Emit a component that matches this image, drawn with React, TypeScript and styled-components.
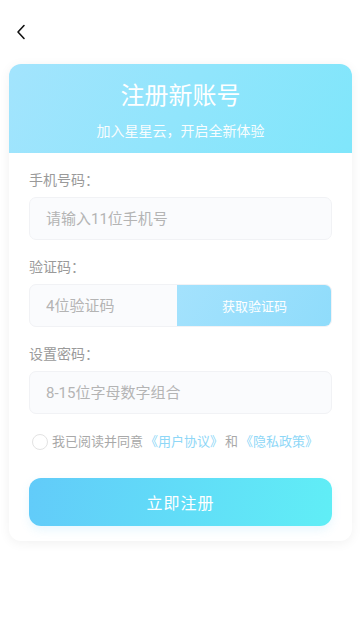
import { createGlobalStyle, styled } from "styled-components";

const GlobalStyle = createGlobalStyle`
  body {
    margin: 0;
    background: #ffffff;
    font-family: Roboto, "Noto Sans CJK SC", sans-serif;
  }
`;

const Page = styled.div`
  width: 361px;
  min-height: 643px;
  background: #ffffff;
`;

const TopBar = styled.div`
  height: 64px;
  display: flex;
  align-items: center;
  padding-left: 12px;
  box-sizing: border-box;
`;

const BackButton = styled.button`
  width: 20px;
  height: 20px;
  padding: 0;
  border: none;
  background: none;
  display: flex;
  align-items: center;
  justify-content: center;
  margin-top: -1px;
`;

const Card = styled.div`
  margin: 0 9px;
  background: #ffffff;
  border-radius: 12px;
  overflow: hidden;
  box-shadow: 0 2px 12px rgba(0, 0, 0, 0.06);
`;

const Header = styled.div`
  height: 89px;
  background: linear-gradient(120deg, #a3e4fd 0%, #7fe6fb 100%);
  display: flex;
  flex-direction: column;
  align-items: center;
  color: #ffffff;
`;

const Title = styled.div`
  margin-top: 16px;
  font-size: 24px;
  line-height: 32px;
`;

const Subtitle = styled.div`
  margin-top: 9px;
  font-size: 14px;
  line-height: 20px;
  opacity: 0.95;
`;

const Form = styled.div`
  padding: 17px 20px 15px;
  display: flex;
  flex-direction: column;
`;

const Field = styled.div`
  display: flex;
  flex-direction: column;
  gap: 7px;
  margin-bottom: 17px;
`;

const Label = styled.div`
  font-size: 14px;
  line-height: 20px;
  color: #9a9a9a;
`;

const InputBox = styled.div`
  height: 43px;
  border: 1px solid #f1f2f5;
  background: #fafbfd;
  border-radius: 7px;
  box-sizing: border-box;
  display: flex;
  align-items: center;
  overflow: hidden;
`;

const Input = styled.input`
  flex: 1;
  min-width: 0;
  height: 100%;
  border: none;
  background: transparent;
  outline: none;
  padding: 0 16px;
  font-family: inherit;
  font-size: 15px;
  color: #333333;
  &::placeholder {
    color: #b4b4b4;
  }
`;

const CodeButton = styled.button`
  width: 155px;
  height: 43px;
  margin: -1px -1px -1px 0;
  border: none;
  border-radius: 0 7px 7px 0;
  background: linear-gradient(120deg, #a4e2fd 0%, #8fdcfb 100%);
  color: #ffffff;
  font-family: inherit;
  font-size: 13px;
`;

const Agreement = styled.div`
  display: flex;
  align-items: center;
  gap: 4px;
  margin-top: 1px;
  padding-left: 3px;
  font-size: 13px;
  line-height: 20px;
  color: #a9a9a9;
  white-space: nowrap;
`;

const Radio = styled.span`
  width: 14px;
  height: 14px;
  border: 1px solid #e3e3e3;
  border-radius: 50%;
  flex-shrink: 0;
`;

const Link = styled.span`
  color: #8ed7f7;
  margin: 0 2px;
`;

const SubmitButton = styled.button`
  margin-top: 26px;
  height: 48px;
  border: none;
  border-radius: 12px;
  background: linear-gradient(100deg, #62cbf9 0%, #60eef6 100%);
  box-shadow: 0 4px 10px rgba(98, 203, 249, 0.15);
  color: #ffffff;
  font-family: inherit;
  font-size: 16px;
  letter-spacing: 1px;
`;

export default function App() {
  return (
    <>
      <GlobalStyle />
      <Page>
        <TopBar>
          <BackButton aria-label="返回">
            <svg width="14" height="16" viewBox="0 0 14 16" fill="none">
              <path d="M9 1.5 L3 8 L9 14.5" stroke="#111" strokeWidth="1.6" strokeLinecap="round" strokeLinejoin="round" />
            </svg>
          </BackButton>
        </TopBar>
        <Card>
          <Header>
            <Title>注册新账号</Title>
            <Subtitle>加入星星云，开启全新体验</Subtitle>
          </Header>
          <Form>
            <Field>
              <Label>手机号码：</Label>
              <InputBox>
                <Input placeholder="请输入11位手机号" />
              </InputBox>
            </Field>
            <Field>
              <Label>验证码：</Label>
              <InputBox>
                <Input placeholder="4位验证码" />
                <CodeButton>获取验证码</CodeButton>
              </InputBox>
            </Field>
            <Field>
              <Label>设置密码：</Label>
              <InputBox>
                <Input type="password" placeholder="8-15位字母数字组合" />
              </InputBox>
            </Field>
            <Agreement>
              <Radio />
              <span>
                我已阅读并同意<Link>《用户协议》</Link>和<Link>《隐私政策》</Link>
              </span>
            </Agreement>
            <SubmitButton>立即注册</SubmitButton>
          </Form>
        </Card>
      </Page>
    </>
  );
}
